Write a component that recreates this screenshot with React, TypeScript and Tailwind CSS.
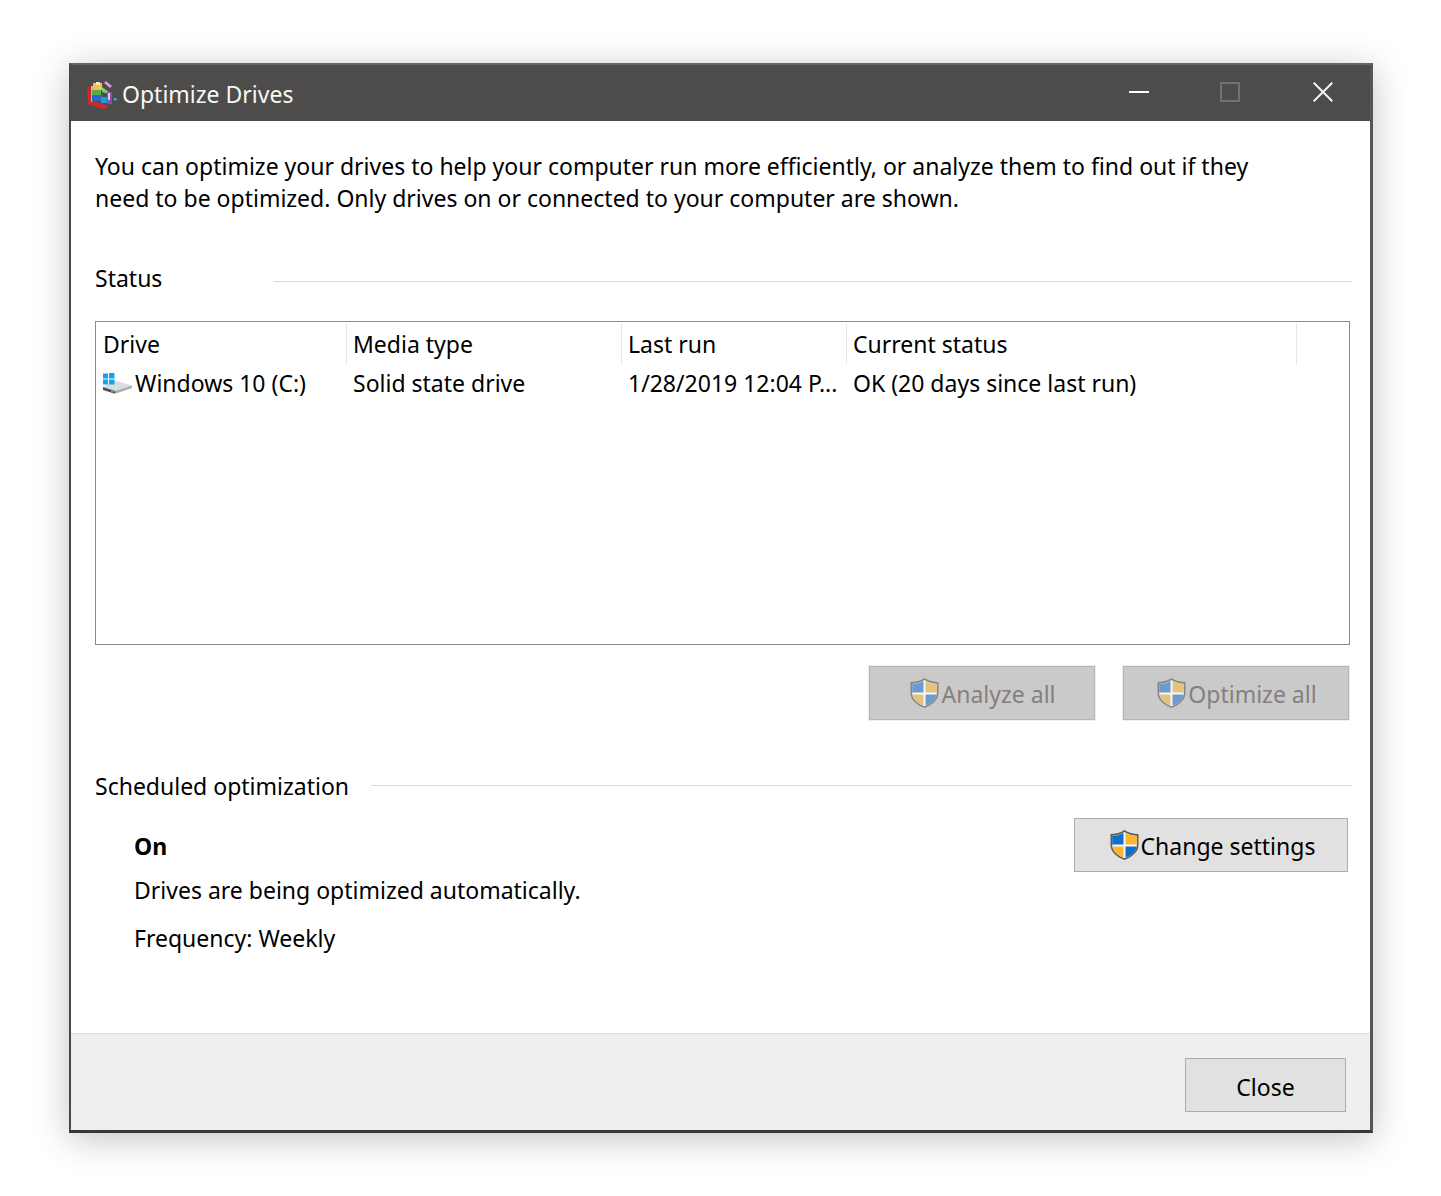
import React from 'react';

const font = { fontFamily: '"Noto Sans", "Open Sans", sans-serif' };

function Shield({ muted = false }: { muted?: boolean }) {
  const blue = muted ? '#6a9ccf' : '#0b70c9';
  const gold = muted ? '#e5c27f' : '#fbb72e';
  const edge = muted ? '#8b8780' : '#5d5d5d';
  return (
    <svg width="29" height="30" viewBox="0 0 29 30" className="shrink-0">
      <path d="M14.5 0 C11 2.6 5.5 4 0.5 4 V15 C0.5 22 7 27 14.5 30 C22 27 28.5 22 28.5 15 V4 C23.5 4 18 2.6 14.5 0 Z" fill={edge} />
      <path d="M14.5 2 C11 4.4 6.5 5.6 2.2 5.7 V15 C2.2 21 8 25.6 14.5 28.2 C21 25.6 26.8 21 26.8 15 V5.7 C22.5 5.6 18 4.4 14.5 2 Z" fill="#f7f7f7" />
      <path d="M13.5 2.7 C10 4.9 6.4 5.9 2.2 6 V14.5 H13.5 Z" fill={blue} />
      <path d="M15.5 2.7 C19 4.9 22.6 5.9 26.8 6 V14.5 H15.5 Z" fill={gold} />
      <path d="M2.3 16.5 H13.5 V27.8 C8 25.5 3 21.5 2.3 16.5 Z" fill={gold} />
      <path d="M26.7 16.5 H15.5 V27.8 C21 25.5 26 21.5 26.7 16.5 Z" fill={blue} />
    </svg>
  );
}

function DefragIcon() {
  return (
    <svg width="30" height="29" viewBox="0 0 30 29" className="shrink-0">
      <path d="M0 8 L4 6 H6 V21 L20 25 V28 L16 29 L1 24 Z" fill="#c92b2b" />
      <path d="M4 6 H6 V21 L4 22 Z" fill="#e8a0a0" />
      <rect x="6" y="3" width="9" height="7" fill="#efc24e" />
      <rect x="9" y="2" width="4" height="3" fill="#f6e6b4" />
      <rect x="5" y="10" width="9" height="5" fill="#56ad4c" />
      <rect x="5" y="15" width="10" height="6" fill="#2c66c8" />
      <rect x="14" y="17" width="6" height="6" fill="#15a0d8" />
      <path d="M15 7 L22 12 L22 14 L15 12 Z" fill="#7ccb74" />
      <path d="M17 3 L19 1 L25 6 L23 8 Z" fill="#d99be0" />
      <rect x="20" y="12" width="5" height="12" fill="#9a47ad" />
      <rect x="21" y="13" width="2" height="7" fill="#e8c9f0" />
      <rect x="27" y="18" width="2.5" height="2.5" fill="#27b7dc" />
    </svg>
  );
}

function DriveIcon() {
  return (
    <svg width="29" height="21" viewBox="0 0 29 21" className="shrink-0">
      <path d="M11 7.5 L29 12.5 L12 18 L0 14 Z" fill="#dcdddf" />
      <path d="M0 14 L12 18 V20.8 L0 17 Z" fill="#4d5054" />
      <path d="M12 18 L29 12.5 V15 L12 20.8 Z" fill="#a9abae" />
      <rect x="8" y="17.6" width="3" height="1.6" fill="#4fc04f" />
      <rect x="0" y="0.5" width="5" height="5" fill="#12a5ec" />
      <rect x="6" y="0" width="5.5" height="5.5" fill="#12a5ec" />
      <rect x="0" y="6.5" width="5" height="5" fill="#12a5ec" />
      <rect x="6" y="6.5" width="5.5" height="5" fill="#12a5ec" />
    </svg>
  );
}

function Section({ title, lineClass, textClass = '' }: { title: string; lineClass: string; textClass?: string }) {
  return (
    <div className="flex items-center h-8">
      <span className={textClass}>{title}</span>
      <div className={`flex-1 h-px bg-[#d9d9d9] ${lineClass}`} />
    </div>
  );
}

export default function App() {
  return (
    <div className="w-[1441px] h-[1196px] bg-white pt-[63px] pl-[69px] text-[23px] leading-8 text-black overflow-hidden" style={font}>
      <div className="w-[1304px] h-[1070px] border-2 border-r-[3px] border-b-[3px] border-t-[#666665] border-l-[#47484a] border-r-[#55565a] border-b-[#36373b] flex flex-col shadow-[0_6px_34px_rgba(0,0,0,0.24)] bg-white">
        {/* Title bar */}
        <div className="h-[56px] bg-[#4d4c4a] flex items-center text-[#f7f7f7] shrink-0">
          <div className="ml-[16px] mr-[5px] translate-y-[1px]"><DefragIcon /></div>
          <span className="translate-y-[1px]">Optimize Drives</span>
          <div className="ml-auto flex items-center">
            <svg width="20" height="20" viewBox="0 0 20 20" className="mr-[71px] -translate-y-[1px]"><rect x="0" y="9" width="20" height="2" fill="#fff" /></svg>
            <svg width="20" height="20" viewBox="0 0 20 20" className="mr-[73px] -translate-y-[1px]"><rect x="1" y="1" width="18" height="18" fill="none" stroke="#727170" strokeWidth="2" /></svg>
            <svg width="20" height="20" viewBox="0 0 20 20" className="mr-[37px] -translate-y-[1px]"><path d="M0.7 0.7 L19.3 19.3 M19.3 0.7 L0.7 19.3" stroke="#f2f2f2" strokeWidth="2" fill="none" /></svg>
          </div>
        </div>

        {/* Body */}
        <div className="flex-1 pl-[24px] pr-[18px] pt-[29px]">
          <p>
            You can optimize your drives to help your computer run more efficiently, or analyze them to find out if they<br />
            need to be optimized. Only drives on or connected to your computer are shown.
          </p>

          <div className="mt-[48px]"><Section title="Status" lineClass="ml-[112px] translate-y-[3px]" /></div>

          {/* Drive table */}
          <div className="mt-[27px] mr-[2px] h-[324px] border border-[#8a8a8a]">
            <div className="grid grid-cols-[251px_275px_225px_450px_1fr] h-[42px] pt-[2px]">
              {['Drive', 'Media type', 'Last run', 'Current status', ''].map((h, i) => (
                <div key={i} className={`pt-[4px] ${i === 0 ? 'pl-[7px]' : 'pl-[6px]'} ${i < 4 ? 'border-r border-[#e5e5e5]' : ''}`}>{h}</div>
              ))}
            </div>
            <div className="grid grid-cols-[251px_275px_225px_450px_1fr] h-[38px] items-center">
              <div className="flex items-center pl-[7px]">
                <DriveIcon />
                <span className="ml-[3px]">Windows 10 (C:)</span>
              </div>
              <div className="pl-[6px]">Solid state drive</div>
              <div className="pl-[6px] whitespace-nowrap">1/28/2019 12:04 P...</div>
              <div className="pl-[6px]">OK (20 days since last run)</div>
            </div>
          </div>

          {/* Disabled actions */}
          <div className="mt-[21px] mr-[3px] flex justify-end gap-[28px]">
            <div className="w-[226px] h-[54px] pl-[2px] bg-[#cacaca] border border-[#b5b5b5] shadow-[0_0_0_1px_#eeeeee] flex items-center justify-center text-[#857f7f]">
              <Shield muted />
              <span className="ml-[2px] translate-y-[1px]">Analyze all</span>
            </div>
            <div className="w-[226px] h-[54px] pl-[2px] bg-[#cacaca] border border-[#b5b5b5] shadow-[0_0_0_1px_#eeeeee] flex items-center justify-center text-[#857f7f]">
              <Shield muted />
              <span className="ml-[2px] translate-y-[1px]">Optimize all</span>
            </div>
          </div>

          <div className="mt-[51px]"><Section title="Scheduled optimization" textClass="-translate-y-[1px]" lineClass="ml-[22px] -translate-y-[2px]" /></div>

          {/* Schedule details */}
          <div className="flex justify-between items-start mt-[15px] pr-[4px]">
            <div className="pl-[39px] pt-[12px]">
              <div className="font-bold">On</div>
              <div className="mt-[12px]">Drives are being optimized automatically.</div>
              <div className="mt-[16px]">Frequency: Weekly</div>
            </div>
            <div className="w-[274px] h-[54px] pl-[3px] bg-[#e1e1e1] border border-[#adadad] flex items-center justify-center">
              <Shield />
              <span className="ml-[2px] translate-y-[1px]">Change settings</span>
            </div>
          </div>
        </div>

        {/* Footer */}
        <div className="h-[97px] shrink-0 bg-[#efefef] border-t border-[#dfdfdf] flex justify-end pt-[24px] pr-[24px]">
          <div className="w-[161px] h-[54px] bg-[#e1e1e1] border border-[#adadad] flex items-center justify-center">
            <span className="translate-y-[2px]">Close</span>
          </div>
        </div>
      </div>
    </div>
  );
}
